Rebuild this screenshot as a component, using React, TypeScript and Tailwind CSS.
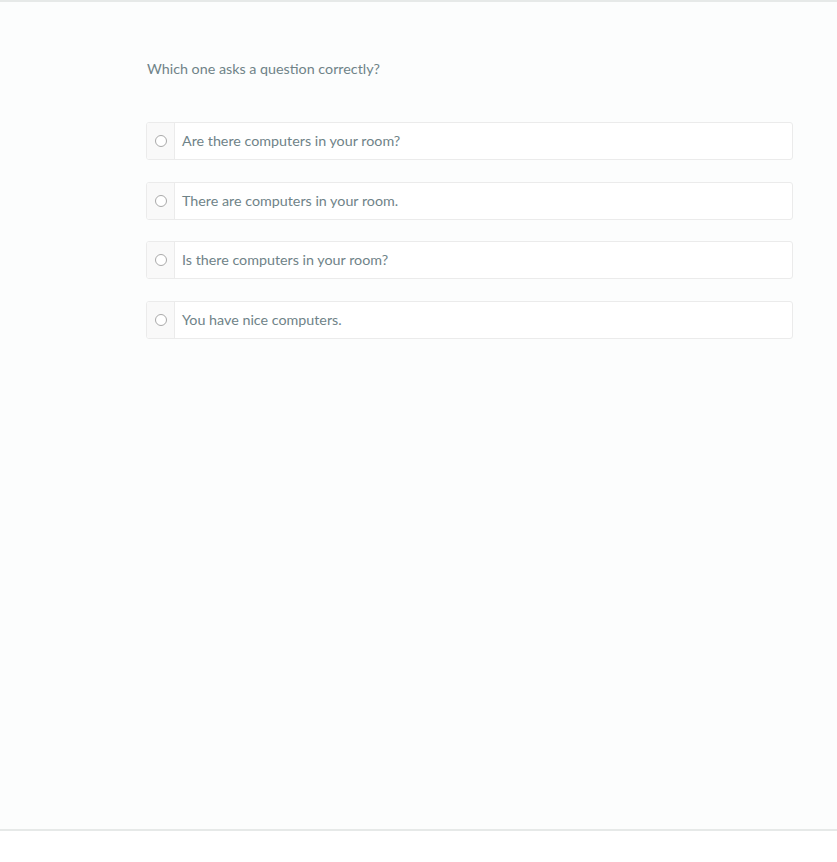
import React from 'react';

const options = [
  'Are there computers in your room?',
  'There are computers in your room.',
  'Is there computers in your room?',
  'You have nice computers.',
];

export default function App() {
  return (
    <div className="min-h-[862px] bg-white" style={{ fontFamily: 'Lato, "Open Sans", sans-serif' }}>
      <div className="h-[831px] border-t-2 border-b-2 border-[#e6e9e8] bg-[#fcfdfd] pl-[146px] pr-[44px] pt-[56px]">
        <p className="pl-px text-[14.3px] leading-[22px] text-[#6f8388]">Which one asks a question correctly?</p>
        <div className="mt-[42px] flex flex-col gap-[21.5px]">
          {options.map((o) => (
            <label key={o} className="flex h-[38px] overflow-hidden rounded-[3px] border border-[#ebebeb] bg-white">
              <span className="flex w-[28px] shrink-0 items-center justify-center border-r border-[#ebebeb] bg-[#f9f9f9]">
                <span className="block h-[12px] w-[12px] rounded-full border border-[#a9a9a9] bg-white" />
              </span>
              <span className="flex items-center pl-[7px] text-[14.3px] text-[#6f8388]">{o}</span>
            </label>
          ))}
        </div>
      </div>
    </div>
  );
}
